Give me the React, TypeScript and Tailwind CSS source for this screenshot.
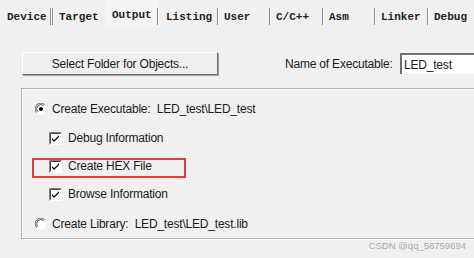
import React from "react";

const tabs = [
  { label: "Device", cls: "w-[52px]", sep: false },
  { label: "Target", cls: "w-[53px]", sep: true },
  { label: "Output", cls: "w-[54px]", sep: false, active: true },
  { label: "Listing", cls: "w-[58px]", sep: false },
  { label: "User", cls: "w-[52px]", sep: true },
  { label: "C/C++", cls: "w-[53px]", sep: true },
  { label: "Asm", cls: "w-[52px]", sep: true },
  { label: "Linker", cls: "w-[53px]", sep: true },
  { label: "Debug", cls: "w-[47px]", sep: true },
];

function Sep() {
  return <div className="w-[2px] h-[17px] mt-[8px] self-start border-l border-[#8a8a8a] border-r border-r-white shrink-0" />;
}

function Checkbox() {
  return (
    <svg width="13" height="13" viewBox="0 0 13 13" className="shrink-0">
      <rect x="0" y="0" width="13" height="13" fill="#ffffff" />
      <path d="M0.5 12.5 V0.5 H12.5" stroke="#808080" strokeWidth="1" fill="none" />
      <path d="M1.5 11.5 V1.5 H11.5" stroke="#404040" strokeWidth="1" fill="none" />
      <path d="M3 6 L5 8.3 L10 3.2 L10 5 L5 10 L3 7.8 Z" fill="#000" />
    </svg>
  );
}

function Radio({ checked }: { checked?: boolean }) {
  return (
    <svg width="12" height="12" viewBox="0 0 12 12" className="shrink-0">
      <circle cx="6" cy="6" r="5.5" fill="#ffffff" />
      <path d="M1.8 9.5 A5 5 0 0 1 9.5 1.8" stroke="#808080" strokeWidth="1.2" fill="none" />
      <path d="M2.8 8.5 A3.8 3.8 0 0 1 8.5 2.8" stroke="#505050" strokeWidth="1" fill="none" />
      {checked && <circle cx="6" cy="6" r="2" fill="#000" />}
    </svg>
  );
}

export default function App() {
  return (
    <div
      className="w-[474px] h-[258px] bg-[#f0f0f0] overflow-hidden relative text-[#1a1a1a] tracking-[-0.2px]"
      style={{ fontFamily: '"Liberation Sans", Arial, sans-serif' }}
    >
      {/* Tab bar */}
      <div className="h-[28px] flex items-stretch bg-[#f0f0f0] tracking-normal">
        {tabs.map((t, i) => (
          <div key={i} className={`${t.cls} flex shrink-0 ${t.active ? "bg-[#f4f4f4]" : ""}`}>
            {t.sep ? <Sep /> : <div className="w-[2px] shrink-0" />}
            <span
              className={`pl-[5px] text-[11px] leading-[13px] font-bold text-[#222] whitespace-nowrap ${t.active ? "mt-[9px]" : "mt-[11px]"}`}
              style={{ fontFamily: '"Liberation Mono", "Courier New", monospace' }}
            >
              {t.label}
            </span>
            {i === 0 || i === 2 ? <div className="ml-auto flex"><Sep /></div> : null}
          </div>
        ))}
      </div>

      {/* Top row */}
      <div className="flex items-center mt-[24px] h-[23px] whitespace-nowrap">
        <div className="ml-[22px] w-[196px] h-[23px] shrink-0 flex items-center justify-center text-[12px] bg-[#efefef] border border-t-white border-l-white border-r-[#6e6e6e] border-b-[#6e6e6e] shadow-[1px_1px_0_#a0a0a0]">
          Select Folder for Objects...
        </div>
        <div className="ml-[67px] w-[106px] shrink-0 text-[12px]">Name of Executable:</div>
        <div className="ml-[9px] w-[90px] h-[21px] bg-white border-t-2 border-l-2 border-t-[#6f6f6f] border-l-[#6f6f6f] text-[12px] pl-[2px] flex items-center shrink-0">
          LED_test
        </div>
      </div>

      {/* Group box */}
      <div className="ml-[21px] mt-[13px] w-[470px] h-[151px] border border-[#b0b0b0] shadow-[inset_1px_1px_0_#ffffff,1px_1px_0_#ffffff] relative text-[12px]">
        <div className="flex items-center h-[16px] mt-[12px] pl-[13px]">
          <Radio checked />
          <span className="ml-[5px]">Create Executable:&nbsp;&nbsp;LED_test\LED_test</span>
        </div>
        <div className="flex items-center h-[16px] mt-[13px] pl-[27px]">
          <Checkbox />
          <span className="ml-[6px]">Debug Information</span>
        </div>
        <div className="flex items-center h-[16px] mt-[12px] pl-[27px]">
          <Checkbox />
          <span className="ml-[6px]">Create HEX File</span>
        </div>
        <div className="flex items-center h-[16px] mt-[12px] pl-[27px]">
          <Checkbox />
          <span className="ml-[6px]">Browse Information</span>
        </div>
        <div className="flex items-center h-[16px] mt-[14px] pl-[13px]">
          <Radio />
          <span className="ml-[5px]">Create Library:&nbsp;&nbsp;LED_test\LED_test.lib</span>
        </div>
        <div className="absolute left-[10px] top-[69px] w-[154px] h-[20px] border-2 border-[#e03c3c]" />
      </div>

      <div className="absolute right-[8px] bottom-[5px] text-[9.5px] tracking-normal text-[#a9a9a9]">CSDN @qq_58759694</div>
    </div>
  );
}
